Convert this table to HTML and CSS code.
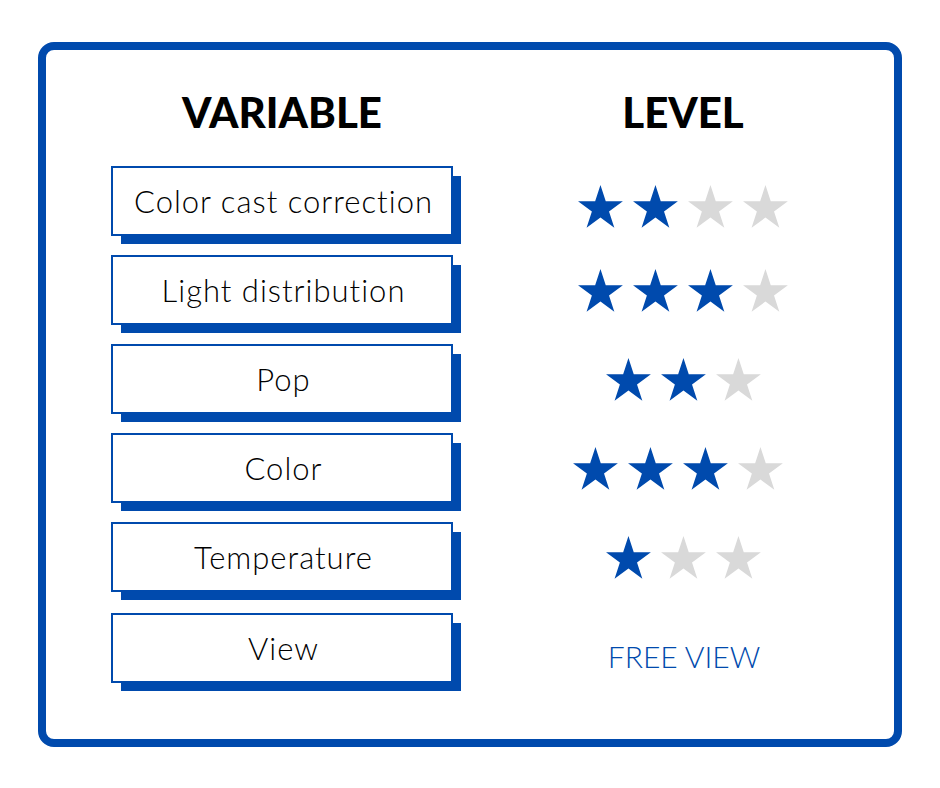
FILE: index.html
```html
<!DOCTYPE html>
<html lang="en">
<head>
<meta charset="utf-8">
<title>Variable / Level</title>
<link rel="stylesheet" href="styles.css">
</head>
<body>
<svg width="0" height="0" class="defs" aria-hidden="true">
  <defs>
    <polygon id="star" points="22.45,0 27.75,16.31 44.89,16.31 31.02,26.38 36.33,42.69 22.45,32.62 8.57,42.69 13.88,26.38 0.01,16.31 17.15,16.31"/>
  </defs>
</svg>
<main class="frame">
  <div class="table">
    <h2 class="heading">VARIABLE</h2>
    <h2 class="heading">LEVEL</h2>

    <div class="label">Color cast correction</div>
    <div class="level level--down">
      <svg class="star on" viewBox="0 0 45 43"><use href="#star"/></svg>
      <svg class="star on" viewBox="0 0 45 43"><use href="#star"/></svg>
      <svg class="star off" viewBox="0 0 45 43"><use href="#star"/></svg>
      <svg class="star off" viewBox="0 0 45 43"><use href="#star"/></svg>
    </div>

    <div class="label">Light distribution</div>
    <div class="level">
      <svg class="star on" viewBox="0 0 45 43"><use href="#star"/></svg>
      <svg class="star on" viewBox="0 0 45 43"><use href="#star"/></svg>
      <svg class="star on" viewBox="0 0 45 43"><use href="#star"/></svg>
      <svg class="star off" viewBox="0 0 45 43"><use href="#star"/></svg>
    </div>

    <div class="label">Pop</div>
    <div class="level">
      <svg class="star on" viewBox="0 0 45 43"><use href="#star"/></svg>
      <svg class="star on" viewBox="0 0 45 43"><use href="#star"/></svg>
      <svg class="star off" viewBox="0 0 45 43"><use href="#star"/></svg>
    </div>

    <div class="label">Color</div>
    <div class="level level--left">
      <svg class="star on" viewBox="0 0 45 43"><use href="#star"/></svg>
      <svg class="star on" viewBox="0 0 45 43"><use href="#star"/></svg>
      <svg class="star on" viewBox="0 0 45 43"><use href="#star"/></svg>
      <svg class="star off" viewBox="0 0 45 43"><use href="#star"/></svg>
    </div>

    <div class="label">Temperature</div>
    <div class="level">
      <svg class="star on" viewBox="0 0 45 43"><use href="#star"/></svg>
      <svg class="star off" viewBox="0 0 45 43"><use href="#star"/></svg>
      <svg class="star off" viewBox="0 0 45 43"><use href="#star"/></svg>
    </div>

    <div class="label label--last">View</div>
    <div class="level level--text">FREE VIEW</div>
  </div>
</main>
</body>
</html>
```

FILE: styles.css
```css
html, body {
  margin: 0;
  padding: 0;
  background: #ffffff;
}

body {
  font-family: "Lato", "Open Sans", sans-serif;
  color: #000000;
}

.defs {
  position: absolute;
  width: 0;
  height: 0;
}

.frame {
  box-sizing: border-box;
  width: 864px;
  height: 705px;
  margin: 42px 0 0 38px;
  border: 8px solid #004aad;
  border-radius: 16px;
  padding: 37px 0 0 65px;
}

.table {
  display: grid;
  grid-template-columns: 342px 240px;
  grid-template-rows: 60px repeat(6, 70px);
  column-gap: 110px;
  row-gap: 19px;
}

.heading {
  margin: 0;
  height: 50px;
  line-height: 50px;
  font-size: 42px;
  font-weight: 900;
  text-align: center;
  letter-spacing: 0;
}

.label {
  box-sizing: border-box;
  height: 70px;
  border: 2px solid #004aad;
  box-shadow: 9px 9px 0 -1px #004aad;
  background: #ffffff;
  display: flex;
  align-items: center;
  justify-content: center;
  font-size: 31px;
  font-weight: 300;
  letter-spacing: 1px;
  padding-left: 3px;
}

.label--last {
  margin-top: 2px;
}

.level {
  display: flex;
  align-items: center;
  justify-content: center;
  gap: 10px;
}

.level--down {
  padding-top: 10px;
}

.level--left {
  padding-right: 10px;
}

.level--text {
  padding-top: 20px;
  font-size: 30px;
  font-weight: 300;
  color: #004aad;
  padding-left: 2px;
}

.star {
  width: 45px;
  height: 43px;
  display: block;
}

.star.on {
  fill: #004aad;
}

.star.off {
  fill: #d9d9d9;
}
```
